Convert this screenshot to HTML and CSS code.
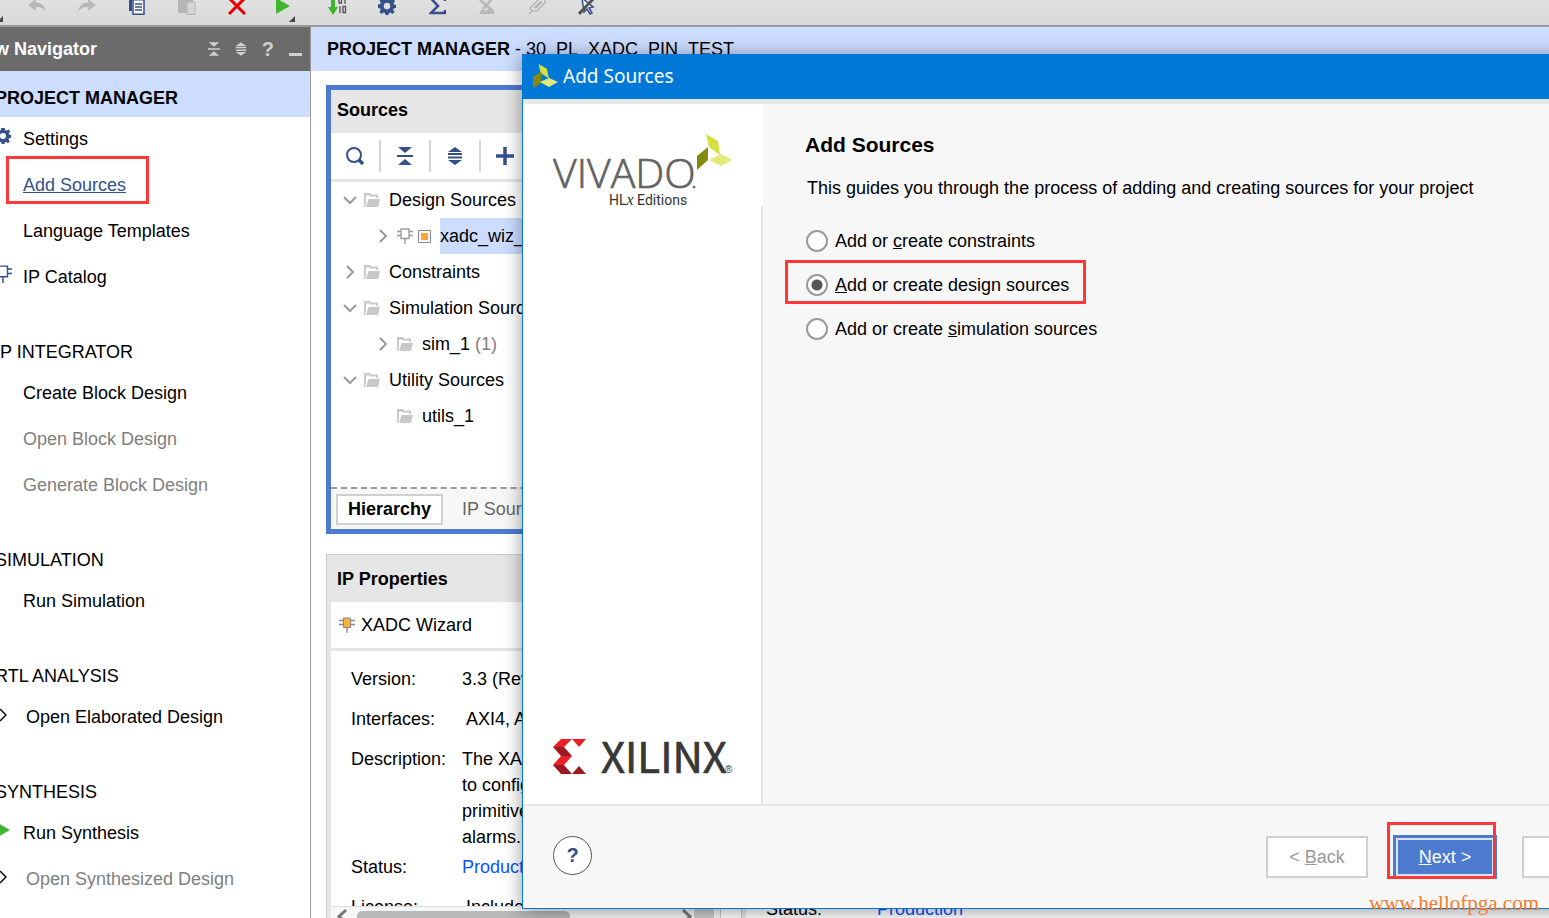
FILE: index.html
```html
<!DOCTYPE html>
<html lang="en">
<head>
  <meta charset="UTF-8" />
  <meta name="viewport" content="width=device-width, initial-scale=1.0" />
  <title>Vivado - Add Sources</title>
  <link rel="stylesheet" href="styles.css">
</head>
<body>
  <!-- shared icons -->
  <svg class="defs" width="0" height="0">
    <symbol id="i-gear" viewBox="0 0 20 20">
      <path fill="currentColor" fill-rule="evenodd" d="M8 1h4l.5 2.6 1.3.6L16 2.800 18 5l-1.600 2.200.6 1.300L19 9v3l-2.300.6-.6 1.300L17.600 16 15.500 18l-2.200-1.500-1.300.6L11.500 19h-3L8 17l-1.300-.6L4.500 18 2.300 15.700 3.800 13.700l-.6-1.300L1 12V8.500L3.200 8l.6-1.300L2.400 4.600 4.500 2.500 6.600 3.900 7.700 3.400zM10 6.800a3.300 3.300 0 1 0 0 6.600 3.300 3.300 0 0 0 0-6.600z"/>
    </symbol>
    <symbol id="i-collapse" viewBox="0 0 16 18">
      <path fill="currentColor" d="M1 0h14L8 6zM0 8h16v2H0zM1 18h14L8 12z"/>
    </symbol>
    <symbol id="i-expand" viewBox="0 0 16 18">
      <path fill="currentColor" d="M8 0l7 5H1zM1 6h14v2H1zM1 9.500h14v2H1zM1 13h14l-7 5z"/>
    </symbol>
    <symbol id="i-down" viewBox="0 0 14 14">
      <path fill="none" stroke="currentColor" stroke-width="2" d="M1 4l6 6 6-6"/>
    </symbol>
    <symbol id="i-right" viewBox="0 0 14 14">
      <path fill="none" stroke="currentColor" stroke-width="2" d="M4 1l6 6-6 6"/>
    </symbol>
    <symbol id="i-right-thin" viewBox="0 0 14 14">
      <path fill="none" stroke="currentColor" stroke-width="1.400" d="M3 1l6 6-6 6"/>
    </symbol>
    <symbol id="i-folder" viewBox="0 0 16 14">
      <path fill="#c8c8c8" d="M0 0h6l1.500 1.500H14V5h-2V3.500H6L5 2.500H2V10l-1 4H0z"/>
      <path fill="#c8c8c8" d="M4.500 6H16l-2 8H2z"/>
    </symbol>
    <symbol id="i-chip" viewBox="0 0 16 16">
      <path fill="none" stroke="currentColor" stroke-width="1.300" d="M4 1h8v9.500H4zM0 3.500h4M0 7.500h4M12 3.500h4M12 7.500h4M8 10.500V16"/>
    </symbol>
    <symbol id="i-play" viewBox="0 0 14 16">
      <path fill="#3fb52e" d="M0 0l14 8-14 8z"/>
    </symbol>
    <symbol id="i-vivado" viewBox="0 0 36 36">
      <path fill="#d6e03c" d="M9 0l12 7 2 14-11-8z"/>
      <path fill="#858a0c" d="M0 22l11-9v13L0 36z"/>
      <path fill="#e3ea7a" d="M12 26l12-6 12 6-12 6z"/>
    </symbol>
  </svg>

  <div class="app">
    <div class="toolbar">
      <button class="tool has-menu" aria-label="Save"></button>
      <button class="tool" aria-label="Undo"><svg width="18" height="14" viewBox="0 0 18 14"><path fill="#b8b8b8" d="M0 6l8-6v3.500c6 0 9 4 10 9.500-2.500-4-5-5-10-5V12z"/></svg></button>
      <button class="tool" aria-label="Redo"><svg width="18" height="14" viewBox="0 0 18 14"><path fill="#b8b8b8" d="M18 6l-8-6v3.500C4 3.500 1 7.500 0 13c2.500-4 5-5 10-5V12z"/></svg></button>
      <button class="tool" aria-label="Copy"><svg width="16" height="18" viewBox="0 0 16 18"><path fill="#34508a" d="M0 0h11v2H3v12H0z"/><path fill="#fff" stroke="#34508a" stroke-width="1.500" d="M4 2.800h11v14.400H4z"/><path stroke="#34508a" stroke-width="1.300" d="M6 7h7M6 10h7M6 13h7"/></svg></button>
      <button class="tool" aria-label="Paste"><svg width="18" height="18" viewBox="0 0 18 18"><path fill="#b5b5b5" d="M0 0h15v16H0z"/><path fill="#d4d4d4" stroke="#b5b5b5" d="M9 5h8v12.500H9z"/></svg></button>
      <button class="tool" aria-label="Delete"><svg width="18" height="18" viewBox="0 0 18 18"><path stroke="#e60000" stroke-width="3" d="M1 1l16 16M17 1L1 17"/></svg></button>
      <button class="tool has-menu" aria-label="Run"><svg width="14" height="16"><use href="#i-play"/></svg></button>
      <button class="tool" aria-label="Generate bitstream"><svg width="19" height="18" viewBox="0 0 19 18"><path fill="#3fb52e" d="M3 0h4v10h3l-5 8-5-8h3z"/><g fill="none" stroke="#555" stroke-width="1.300"><path d="M11 1h2.500v5H11zM17 0v7M12 9v7M15 9.500h2.500v6H15z"/></g></svg></button>
      <button class="tool blue" aria-label="Settings"><svg width="20" height="20"><use href="#i-gear"/></svg></button>
      <button class="tool blue" aria-label="Report"><svg width="17" height="18" viewBox="0 0 17 18"><path fill="none" stroke="currentColor" stroke-width="2.500" d="M16 4V1.500H2L9 9l-7 7h14V13"/></svg></button>
      <button class="tool" aria-label="Edit"><svg width="18" height="18" viewBox="0 0 18 18"><path stroke="#b8b8b8" stroke-width="2.500" d="M2 3l14 12M15 1L5 12"/><path fill="#b8b8b8" d="M1 17l3-5 4 2 4-3 5 6z"/></svg></button>
      <button class="tool" aria-label="Link"><svg width="18" height="18" viewBox="0 0 18 18"><path fill="none" stroke="#b8b8b8" stroke-width="1.600" d="M2 11l9-9h6v4l-8 8H4zM6 11l7-7M8 11l6-6M1 17l4-4"/></svg></button>
      <button class="tool blue" aria-label="Cursor"><svg width="18" height="18" viewBox="0 0 18 18"><path fill="#fff" stroke="currentColor" stroke-width="1.500" d="M4 1l11 9-4 1 3 5-2 1-3-5-3 3z"/><path stroke="#555" stroke-width="3" d="M17 0L1 17"/></svg></button>
    </div>

    <div class="workspace">
      <nav class="navigator">
        <div class="nav-header">
          <span>Flow Navigator</span>
          <div class="nav-tools">
            <svg width="12" height="14"><use href="#i-collapse"/></svg>
            <svg width="12" height="14"><use href="#i-expand"/></svg>
            <b>?</b>
            <i class="minimize"></i>
          </div>
        </div>

        <h2 class="nav-title selected">PROJECT MANAGER</h2>
        <ul class="nav-list">
          <li><span class="nav-icon"><svg width="18" height="18"><use href="#i-gear"/></svg></span>Settings</li>
          <li class="marked"><a href="#">Add Sources</a></li>
          <li>Language Templates</li>
          <li><span class="nav-icon"><svg width="18" height="18"><use href="#i-chip"/></svg></span>IP Catalog</li>
        </ul>

        <h2 class="nav-title">IP INTEGRATOR</h2>
        <ul class="nav-list">
          <li>Create Block Design</li>
          <li class="disabled">Open Block Design</li>
          <li class="disabled">Generate Block Design</li>
        </ul>

        <h2 class="nav-title">SIMULATION</h2>
        <ul class="nav-list">
          <li>Run Simulation</li>
        </ul>

        <h2 class="nav-title">RTL ANALYSIS</h2>
        <ul class="nav-list">
          <li class="group"><span class="nav-icon"><svg width="14" height="14"><use href="#i-right-thin"/></svg></span>Open Elaborated Design</li>
        </ul>

        <h2 class="nav-title">SYNTHESIS</h2>
        <ul class="nav-list">
          <li><span class="nav-icon"><svg width="16" height="18"><use href="#i-play"/></svg></span>Run Synthesis</li>
          <li class="group disabled"><span class="nav-icon"><svg width="14" height="14"><use href="#i-right-thin"/></svg></span>Open Synthesized Design</li>
        </ul>
      </nav>

      <main class="main">
        <div class="main-header"><b>PROJECT MANAGER</b> - 30_PL_XADC_PIN_TEST</div>
        <div class="columns">
          <div class="column">
            <section class="panel sources">
              <h3 class="panel-title">Sources</h3>
              <div class="panel-tools">
                <button aria-label="Search"><svg width="20" height="20" viewBox="0 0 20 20"><circle cx="9" cy="9" r="7" fill="none" stroke="currentColor" stroke-width="2"/><path stroke="currentColor" stroke-width="3.500" d="M14 14l4 4"/></svg></button>
                <button aria-label="Collapse all"><svg width="16" height="18"><use href="#i-collapse"/></svg></button>
                <button aria-label="Expand all"><svg width="16" height="18"><use href="#i-expand"/></svg></button>
                <button aria-label="Add"><svg width="18" height="18" viewBox="0 0 18 18"><path stroke="currentColor" stroke-width="3.500" d="M9 0v18M0 9h18"/></svg></button>
              </div>
              <ul class="tree">
                <li><svg width="14" height="14"><use href="#i-down"/></svg><svg width="16" height="14"><use href="#i-folder"/></svg><span>Design Sources</span></li>
                <li class="child"><svg width="14" height="14"><use href="#i-right"/></svg>
                  <span class="pair"><svg width="16" height="16"><use href="#i-chip"/></svg><svg width="13" height="13" viewBox="0 0 13 13"><path fill="#fff" stroke="#888" d="M.5.5h12v12H.5z"/><path fill="#f9a63a" d="M3 3h7v7H3z"/></svg></span>
                  <span class="current">xadc_wiz_0</span></li>
                <li><svg width="14" height="14"><use href="#i-right"/></svg><svg width="16" height="14"><use href="#i-folder"/></svg><span>Constraints</span></li>
                <li><svg width="14" height="14"><use href="#i-down"/></svg><svg width="16" height="14"><use href="#i-folder"/></svg><span>Simulation Sources</span></li>
                <li class="child"><svg width="14" height="14"><use href="#i-right"/></svg><svg width="16" height="14"><use href="#i-folder"/></svg><span>sim_1 <em>(1)</em></span></li>
                <li><svg width="14" height="14"><use href="#i-down"/></svg><svg width="16" height="14"><use href="#i-folder"/></svg><span>Utility Sources</span></li>
                <li class="leaf"><svg width="16" height="14"><use href="#i-folder"/></svg><span>utils_1</span></li>
              </ul>
              <div class="tabs">
                <button class="active">Hierarchy</button>
                <button>IP Sources</button>
              </div>
            </section>

            <section class="panel properties">
              <h3 class="panel-title">IP Properties</h3>
              <div class="ip-name"><svg width="16" height="16" viewBox="0 0 16 16"><path fill="none" stroke="#888" stroke-width="1.300" d="M0 3.500h16M0 7.500h16M8 10.500V16"/><path fill="#f9b233" stroke="#888" d="M4.500 1h7v9.500h-7z"/></svg>XADC Wizard</div>
              <dl class="details">
                <div><dt>Version:</dt><dd>3.3 (Rev. 8)</dd></div>
                <div><dt>Interfaces:</dt><dd class="indent">AXI4, AXI4-Stream</dd></div>
                <div class="tall"><dt>Description:</dt><dd>The XADC Wizard helps<br>to configure the XADC<br>primitive and its<br>alarms.</dd></div>
                <div><dt>Status:</dt><dd><a href="#">Production</a></dd></div>
                <div><dt>License:</dt><dd class="indent">Included</dd></div>
              </dl>
              <div class="scrollbar">
                <svg width="14" height="14"><path fill="none" stroke="#777" stroke-width="3" d="M11 3L4 9.500l7 6.500"/></svg>
                <span class="thumb"></span>
                <svg width="14" height="14"><path fill="none" stroke="#777" stroke-width="3" d="M3 3l7 6.500L3 16"/></svg>
                <span class="corner"></span>
              </div>
            </section>
          </div>

          <section class="panel runs">
            <dl class="details">
              <div><dt>Status:</dt><dd><a href="#">Production</a></dd></div>
            </dl>
          </section>
        </div>
      </main>
    </div>
  </div>

  <div class="dialog" role="dialog" aria-label="Add Sources">
    <div class="dialog-title">
      <svg width="25" height="25" viewBox="0 0 36 36"><path fill="#d6e03c" d="M8 0l12 7 3 14-12-8z"/><path fill="#858a0c" d="M0 18l12-7v16L0 35z"/><path fill="#e3ea7a" d="M10 26l13-6 13 6-13 7z"/></svg>
      Add Sources
    </div>
    <div class="dialog-body">
      <aside class="brand">
        <div class="brand-top">
          <svg width="184" height="78" viewBox="0 0 184 78">
            <text class="vivado" x="0" y="56">VIVADO</text>
            <circle cx="141" cy="55" r="1.500" fill="#777"/>
            <text class="edition" x="56" y="73">HL<tspan class="edition-x">x</tspan> Editions</text>
            <use href="#i-vivado" x="144" y="2" width="36" height="36"/>
          </svg>
        </div>
        <div class="brand-bottom">
          <svg width="184" height="40" viewBox="0 0 184 40">
            <path fill="#ec1f27" d="M8 1h11l-8 8H0zM19 1h14l-7 8z"/>
            <path fill="#9b1a22" d="M0 9h11l8 9H8z"/>
            <path fill="#ec1f27" d="M8 18h11l-8 9H0z"/>
            <path fill="#9b1a22" d="M0 27h11l8 9H8zM19 36l7-8 7 8z"/>
            <text class="xilinx" x="48" y="35">XILINX</text>
            <text class="reg" x="172" y="35">®</text>
          </svg>
        </div>
      </aside>
      <form class="choices">
        <h1>Add Sources</h1>
        <p>This guides you through the process of adding and creating sources for your project</p>
        <label><input type="radio" name="kind"><span>Add or <u>c</u>reate constraints</span></label>
        <label class="marked"><input type="radio" name="kind" checked><span><u>A</u>dd or create design sources</span></label>
        <label><input type="radio" name="kind"><span>Add or create <u>s</u>imulation sources</span></label>
      </form>
    </div>
    <div class="dialog-footer">
      <button class="help" aria-label="Help">?</button>
      <button class="btn back" disabled>&lt; <u>B</u>ack</button>
      <div class="marked"><button class="btn next"><u>N</u>ext &gt;</button></div>
      <button class="btn cancel">Cancel</button>
    </div>
  </div>

  <div class="watermark">www.hellofpga.com</div>
</body>
</html>
```
FILE: styles.css
```css
:root {
  --blue: #34508a;
  --accent: #4d7bcf;
  --select: #ccddff;
  --panel: #e6e6e6;
  --light: #f7f7f7;
  --mark: #ff3737;
}

*,
*::after {
  box-sizing: border-box;
}

body {
  position: relative;
  margin: 0;
  height: 100vh;
  overflow: hidden;
  background: #fff;
  color: #000;
  font: 18px/26px "Liberation Sans", Arial, sans-serif;
}

h1, h2, h3, p, ul, dl, dd {
  margin: 0;
  padding: 0;
  list-style: none;
}

button {
  font: inherit;
  padding: 0;
  border: none;
  background: none;
}

svg {
  display: block;
  flex: none;
}

.defs {
  position: absolute;
}

/* the main window is scrolled a little past the top left corner */
.app {
  display: flex;
  flex-direction: column;
  height: calc(100vh + 13px);
  margin: -13px 0 0 -38px;
}

.toolbar {
  display: flex;
  flex: none;
  height: 40px;
  background: linear-gradient(#e4e4e4, #d9d9d9);
  border-bottom: 2px solid #999;
}

.tool {
  position: relative;
  display: flex;
  align-items: center;
  justify-content: center;
  width: 50px;
}

.tool.has-menu {
  padding-right: 8px;
}

.tool.has-menu::after {
  content: "";
  position: absolute;
  right: 17px;
  bottom: 3px;
  border: 3px solid transparent;
  border-right-color: #444;
  border-bottom-color: #444;
}

.tool:first-child::after {
  right: 9px;
}

.blue {
  color: var(--blue);
}

.workspace {
  display: flex;
  flex: 1;
  min-height: 0;
}

/* navigator */
.navigator {
  flex: none;
  width: 349px;
  border-right: 1px solid #999;
  overflow: hidden;
}

.nav-header {
  display: flex;
  align-items: center;
  justify-content: space-between;
  height: 44px;
  padding: 0 8px 0 6px;
  background: #6b6b6b;
  color: #fff;
  font-weight: bold;
}

.nav-tools {
  display: flex;
  align-items: center;
  gap: 15px;
  color: #d0d0d0;
}

.nav-tools b {
  font-size: 20px;
}

.minimize {
  width: 13px;
  height: 3px;
  margin-top: 10px;
  background: #d0d0d0;
}

.nav-title {
  height: 46px;
  padding: 7px 0 0 33px;
  font-size: 18px;
  font-weight: normal;
  line-height: 40px;
}

.nav-title.selected {
  background: var(--select);
  font-weight: bold;
}

.nav-list {
  margin-bottom: 24px;
}

.nav-list li {
  position: relative;
  display: flex;
  align-items: center;
  height: 46px;
  padding: 0 0 2px 61px;
}

.nav-list .group {
  padding-left: 64px;
}

.nav-icon {
  position: absolute;
  left: 32px;
  top: 10px;
  color: var(--blue);
}

.group .nav-icon {
  left: 35px;
  top: 13px;
  color: #000;
}

.nav-list a {
  color: var(--blue);
}

.disabled {
  color: #808080;
}

.marked {
  position: relative;
}

.marked::after {
  content: "";
  position: absolute;
  border: 3px solid var(--mark);
  pointer-events: none;
}

.nav-list .marked::after {
  left: 44px;
  top: -7px;
  width: 143px;
  height: 48px;
}

/* main area */
.main {
  display: flex;
  flex: 1;
  flex-direction: column;
  min-width: 0;
}

.main-header {
  flex: none;
  height: 44px;
  padding-left: 16px;
  background: var(--select);
  line-height: 44px;
}

.columns {
  display: flex;
  flex: 1;
  gap: 20px;
  min-height: 0;
  padding: 14px 0 0 15px;
}

.column {
  display: flex;
  flex: none;
  flex-direction: column;
  gap: 20px;
  width: 395px;
}

.panel-title {
  height: 43px;
  padding-left: 6px;
  background: var(--panel);
  font-size: 18px;
  line-height: 40px;
}

.sources {
  border: 5px solid var(--accent);
}

.panel-tools {
  display: flex;
  align-items: center;
  height: 49px;
  border-bottom: 3px solid var(--panel);
}

.panel-tools button {
  display: flex;
  align-items: center;
  justify-content: center;
  width: 50px;
  height: 32px;
  border-right: 2px solid #d4d4d4;
  color: var(--blue);
}

.tree {
  height: 305px;
}

.tree li {
  display: flex;
  align-items: center;
  gap: 8px;
  height: 36px;
  padding-left: 12px;
}

.tree li.child {
  padding-left: 45px;
}

.tree li.leaf {
  padding-left: 66px;
}

.tree svg {
  color: #999;
}

.tree li:not(.leaf) > svg:first-child {
  margin-right: -1px;
}

.tree span {
  margin-left: 1px;
}

.tree .pair {
  display: flex;
  align-items: center;
  gap: 5px;
  margin: 0;
}

.tree .current {
  flex: 1;
  background: var(--select);
  line-height: 36px;
}

.tree em {
  color: #808080;
  font-style: normal;
}

.tabs {
  display: flex;
  align-items: center;
  gap: 7px;
  height: 42px;
  padding-left: 5px;
  background: var(--light);
  border-top: 2px dashed #999;
}

.tabs button {
  height: 31px;
  padding: 0 10px;
  border: 2px solid transparent;
  color: #666;
}

.tabs .active {
  border-color: #d0d0d0;
  background: #fff;
  color: #000;
  font-weight: bold;
}

.properties {
  display: flex;
  flex: 1;
  flex-direction: column;
  min-height: 0;
  border: 1px solid #ccc;
  border-bottom: none;
  padding-left: 4px;
  background: var(--panel);
}

.properties .panel-title {
  flex: none;
  height: 47px;
  line-height: 48px;
}

.ip-name {
  display: flex;
  flex: none;
  align-items: center;
  gap: 6px;
  height: 46px;
  margin-bottom: 3px;
  padding-left: 8px;
  background: #fff;
}

.details {
  flex: 1;
  min-height: 0;
  padding: 15px 0 0 20px;
  overflow: hidden;
  background: #fff;
  white-space: nowrap;
}

.details div {
  display: grid;
  grid-template-columns: 111px 1fr;
  margin-bottom: 14px;
}

.details .tall {
  margin-bottom: 4px;
}

.details .indent {
  padding-left: 4px;
}

.details a {
  color: #0a55ff;
  text-decoration: none;
}

.scrollbar {
  display: flex;
  flex: none;
  height: 12px;
  padding-left: 4px;
  overflow: hidden;
  border-top: 1px solid #ddd;
  background: #f7f7f7;
}

.scrollbar .thumb {
  flex: none;
  width: 213px;
  height: 20px;
  margin: 4px 110px 0 8px;
  border-radius: 5px;
  background: #b9b9b9;
}

.scrollbar .corner {
  width: 20px;
  background: #ccc;
}

.runs {
  flex: 1;
  display: flex;
  flex-direction: column;
  justify-content: flex-end;
  border: 1px solid #ccc;
  border-width: 1px 0 0 1px;
  padding-left: 4px;
  background: var(--panel);
}

.runs .details {
  display: flex;
  flex-direction: column;
  justify-content: flex-end;
}

.runs .details div {
  margin-bottom: -4px;
}

/* dialog window */
.dialog {
  position: absolute;
  left: 522px;
  right: -110px;
  top: 54px;
  bottom: 9px;
  display: flex;
  flex-direction: column;
  border: 1px solid #0078d7;
  background: var(--light);
  box-shadow: 0 2px 18px rgba(0, 0, 0, 0.4);
}

.dialog-title {
  display: flex;
  flex: none;
  align-items: center;
  gap: 5px;
  height: 44px;
  padding: 0 0 2px 10px;
  background: #0078d7;
  color: #fff;
  font: 19px/26px "Noto Sans", "Open Sans", sans-serif;
}

.dialog-body {
  display: flex;
  flex: 1;
  min-height: 0;
  border-top: 5px solid var(--panel);
}

.brand {
  display: flex;
  flex: none;
  flex-direction: column;
  width: 240px;
  background: #fff;
}

.brand-top {
  height: 102px;
  padding: 28px 0 0 30px;
}

.brand-bottom {
  display: flex;
  flex: 1;
  align-items: flex-end;
  padding: 0 0 26px 30px;
  border-right: 2px solid var(--panel);
}

.vivado {
  font: 300 41px "Open Sans", Lato, sans-serif;
  fill: #636363;
  stroke: #636363;
  stroke-width: 0.7px;
}

.edition {
  font: 14px Roboto, sans-serif;
  fill: #333;
}

.edition-x {
  font: italic 16px "Liberation Serif", serif;
}

.xilinx {
  font: 42px "Noto Sans CJK SC", Lato, sans-serif;
  fill: #393836;
  stroke: #393836;
  stroke-width: 0.7px;
}

.reg {
  font: 10px "Liberation Sans", sans-serif;
  fill: #393836;
}

.choices {
  padding: 28px 0 0 42px;
}

.choices h1 {
  font-size: 21px;
  line-height: 26px;
}

.choices p {
  padding: 17px 0 18px 2px;
}

.choices label {
  display: flex;
  align-items: center;
  gap: 7px;
  width: 300px;
  height: 44px;
}

.choices input {
  appearance: none;
  width: 22px;
  height: 22px;
  margin: 0 0 0 1px;
  border: 2px solid #999;
  border-radius: 50%;
  background: #fff;
}

.choices input:checked {
  background: radial-gradient(circle, #555 5px, #fff 6px);
}

.choices .marked::after {
  left: -20px;
  top: -3px;
  width: 301px;
  height: 44px;
}

.dialog-footer {
  display: flex;
  flex: none;
  align-items: center;
  height: 104px;
  padding: 0 24px 0 30px;
  border-top: 2px solid var(--panel);
}

.help {
  width: 39px;
  height: 39px;
  margin: 0 auto 3px 0;
  border: 1px solid #555;
  border-radius: 50%;
  background: #fff;
  color: var(--blue);
  font: bold 20px "Liberation Sans", sans-serif;
}

.btn {
  width: 102px;
  height: 42px;
  border: 2px solid #d0d0d0;
  background: #fff;
}

.back {
  margin-right: 25px;
  color: #999;
}

.next {
  width: 104px;
  height: 44px;
  border: 3px solid var(--accent);
  outline: 2px solid #dbe5f7;
  outline-offset: -5px;
  background: var(--accent);
  color: #fff;
}

.dialog-footer .marked::after {
  left: -6px;
  top: -13px;
  width: 109px;
  height: 57px;
}

.cancel {
  width: 112px;
  margin-left: 25px;
}

.watermark {
  position: absolute;
  right: 10px;
  bottom: 2px;
  color: #f47b30;
  font: 21px/26px "Liberation Serif", serif;
}
```
